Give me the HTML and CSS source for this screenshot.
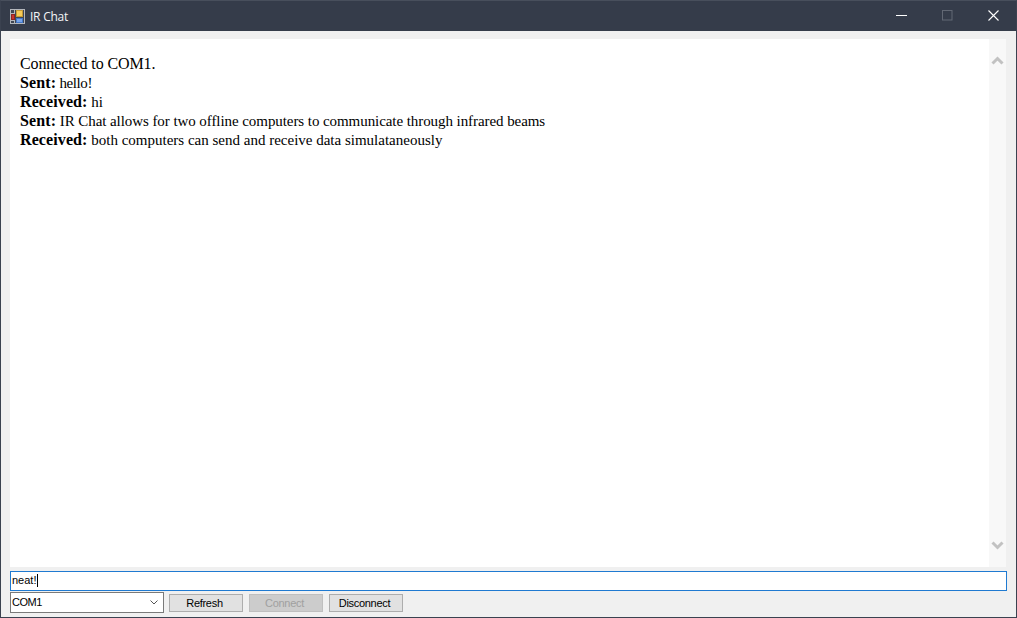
FILE: index.html
```html
<!DOCTYPE html>
<html lang="en">
<head>
<meta charset="utf-8">
<title>IR Chat</title>
<link rel="stylesheet" href="styles.css">
</head>
<body>
<div class="window">
  <header class="titlebar">
    <svg class="app-icon" width="15" height="15" viewBox="0 0 15 15">
      <rect x="0.5" y="0.5" width="14" height="14" fill="#3f4653" stroke="#b4b7bc"/>
      <path d="M0 4.5h5M0 11.5h5M4.5 0v15M5 14.5h10" stroke="#b4b7bc" fill="none"/>
      <rect x="1.5" y="5.5" width="3" height="5" fill="#c8322e" stroke="#8e2320"/>
      <rect x="6.5" y="1.5" width="6" height="6" fill="#f6cb58" stroke="#c49a34"/>
      <rect x="6.5" y="9.5" width="6" height="4" fill="#78a4ea" stroke="#4478c8"/>
    </svg>
    <span class="title">IR Chat</span>
    <div class="controls">
      <span class="ctl">
        <svg width="11" height="11" viewBox="0 0 11 11"><path d="M0 5.5h11" stroke="#fff" fill="none"/></svg>
      </span>
      <span class="ctl">
        <svg width="11" height="11" viewBox="0 0 11 11"><rect x="0.5" y="0.5" width="9.5" height="9.5" stroke="#626874" fill="none"/></svg>
      </span>
      <span class="ctl">
        <svg width="11" height="11" viewBox="0 0 11 11"><path d="M0.5 0.5l10 10M10.5 0.5l-10 10" stroke="#fff" stroke-width="1.1" fill="none"/></svg>
      </span>
    </div>
  </header>
  <main class="content">
    <section class="chat-frame">
      <div class="log">
        <p class="status">Connected to COM1.</p>
        <p class="short"><b>Sent:</b> hello!</p>
        <p><b>Received:</b> hi</p>
        <p class="long"><b>Sent:</b> IR Chat allows for two offline computers to communicate through infrared beams</p>
        <p><b>Received:</b> both computers can send and receive data simulataneously</p>
      </div>
      <div class="scrollbar">
        <svg width="13" height="10" viewBox="0 0 13 10"><path d="M1.5 8.5l5-5 5 5" stroke="#c2c2c2" stroke-width="3" fill="none"/></svg>
        <svg width="13" height="10" viewBox="0 0 13 10"><path d="M1.5 1.5l5 5 5-5" stroke="#c2c2c2" stroke-width="3" fill="none"/></svg>
      </div>
    </section>
    <div class="input">neat!<span class="caret"></span></div>
    <div class="toolbar">
      <div class="select">
        <span class="select-value">COM1</span>
        <svg width="8" height="5" viewBox="0 0 8 5"><path d="M0.5 0.5l3.5 3.5 3.5-3.5" stroke="#555" fill="none"/></svg>
      </div>
      <button class="btn" type="button">Refresh</button>
      <button class="btn" type="button" disabled>Connect</button>
      <button class="btn" type="button">Disconnect</button>
    </div>
  </main>
</div>
</body>
</html>
```
FILE: styles.css
```css
* { box-sizing: border-box; }
html, body { margin: 0; height: 100%; }
body { overflow: hidden; background: #f0f0f0; }
.window {
  width: 1017px;
  height: 618px;
  display: flex;
  flex-direction: column;
  border: 1px solid #3b4250;
  border-top-color: #484f5c;
  background: #f0f0f0;
}
.titlebar {
  height: 30px;
  flex: none;
  background: #353c4a;
  display: flex;
  align-items: center;
  padding-left: 9px;
  color: #fff;
}
.app-icon { flex: none; }
.title {
  margin-left: 5px;
  font-family: "Open Sans", sans-serif;
  font-size: 12px;
  letter-spacing: -0.25px;
  color: #f4f5f6;
}
.controls { margin-left: auto; display: flex; }
.ctl {
  width: 46px;
  height: 30px;
  padding-top: 9px;
  display: flex;
  align-items: flex-start;
  justify-content: center;
}
.content {
  flex: 1;
  min-height: 0;
  display: flex;
  flex-direction: column;
  padding: 8px 9px 4px;
}
.chat-frame {
  flex: 1;
  min-height: 0;
  margin-right: 1px;
  display: flex;
  background: #fff;
}
.log {
  flex: 1;
  padding: 15px 10px 0;
  font-family: "Liberation Serif", serif;
  font-size: 15px;
  line-height: 19px;
  color: #000;
}
.log p { margin: 0; height: 19px; }
.log b { font-size: 16px; line-height: 0; letter-spacing: 0.1px; }
.log .status { font-size: 16px; letter-spacing: -0.11px; margin-bottom: 1px; }
.log .short { letter-spacing: -0.4px; }
.log .long { letter-spacing: -0.07px; }
.scrollbar {
  width: 17px;
  background: #f8f8f8;
  display: flex;
  flex-direction: column;
  justify-content: space-between;
  align-items: center;
  padding: 16px 0 16px;
}
.input {
  margin-top: 4px;
  height: 20px;
  flex: none;
  border: 1px solid #1f7ad1;
  background: #fff;
  padding: 0 1px 2px;
  font-family: "Liberation Sans", sans-serif;
  font-size: 11px;
  color: #000;
  display: flex;
  align-items: center;
}
.caret { width: 1px; height: 13px; margin-left: 1px; background: #000; }
.toolbar {
  margin-top: 1px;
  display: flex;
  align-items: center;
  flex: none;
}
.select {
  width: 154px;
  height: 21px;
  border: 1px solid #7a7a7a;
  background: #fff;
  display: flex;
  align-items: center;
  justify-content: space-between;
  padding: 0 5px 1px 1px;
  font-family: "Liberation Sans", sans-serif;
  font-size: 11px;
  color: #000;
}
.select-value { letter-spacing: -0.5px; }
.btn {
  width: 74px;
  height: 18px;
  margin: 0 0 0 5px;
  padding: 0 3px 0 0;
  border: 1px solid #adadad;
  background: #e1e1e1;
  font-family: "Liberation Sans", sans-serif;
  font-size: 11px;
  letter-spacing: -0.3px;
  color: #000;
}
.btn + .btn { margin-left: 6px; }
.btn:disabled { background: #cccccc; border-color: #bfbfbf; color: #a0a0a0; }
```
